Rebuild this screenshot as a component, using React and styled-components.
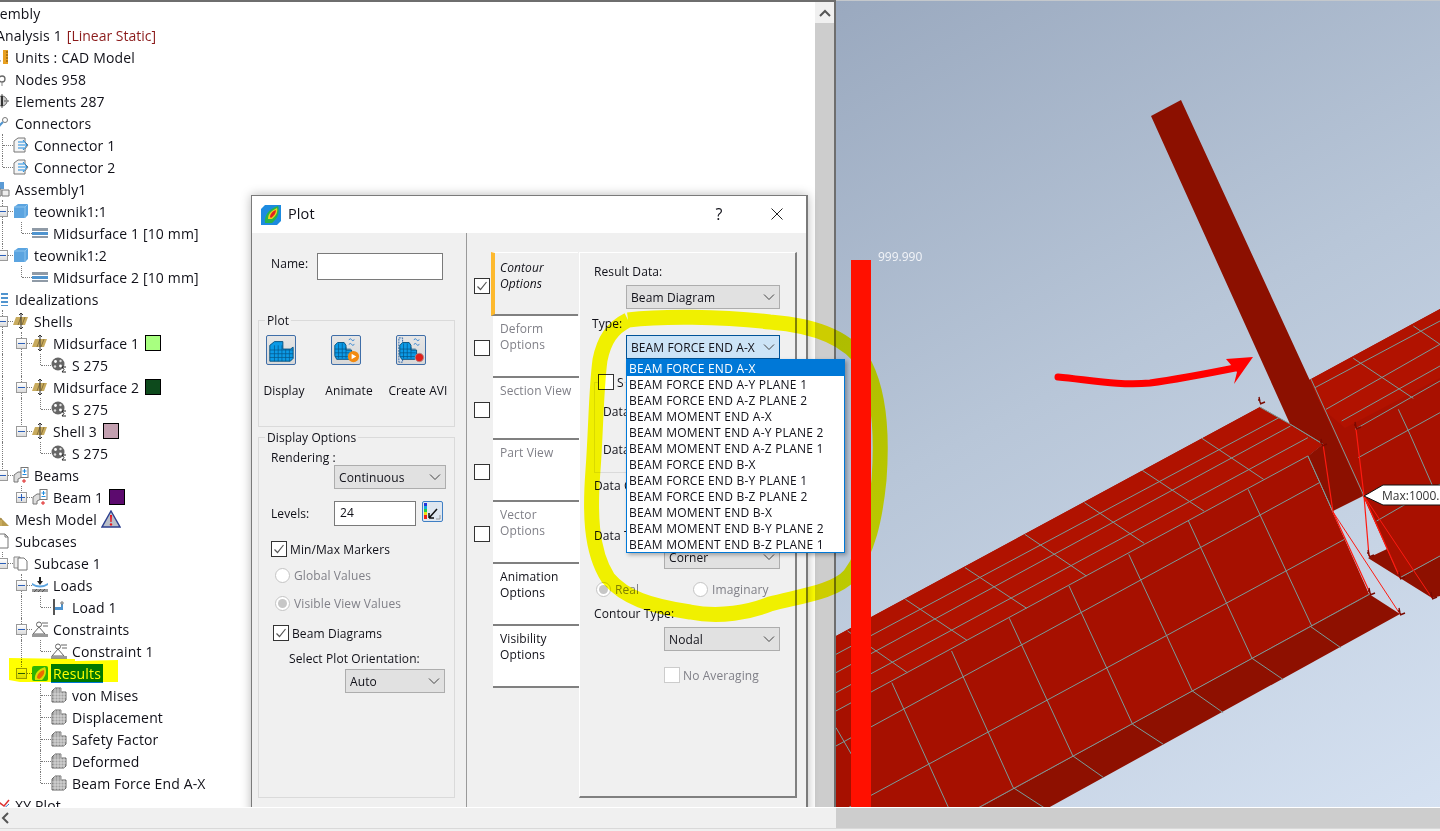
import React from "react";
import styled, { createGlobalStyle, css } from "styled-components";

const GlobalStyle = createGlobalStyle`
	html, body {
		margin: 0;
		height: 100%;
		overflow: hidden;
		background: #f0f0f0;
		font-family: "Open Sans", "Noto Sans", sans-serif;
	}
	* {
		box-sizing: border-box;
	}
`;

// tree icons, all on a 16x16 grid
const TREE_ICONS = {
	units: (
		<>
			<path d="M2 2h3v8a2.5 2.5 0 1 1-3 0z" fill="#eee" stroke="#666" />
			<circle cx="3.5" cy="12" r="1.6" fill="#d9534f" />
			<rect x="9" y="1" width="5" height="14" fill="#e8a020" />
			<path d="M12 3h2M12 6h2M12 9h2M12 12h2" stroke="#7a4a00" />
		</>
	),
	node: (
		<>
			<circle cx="8" cy="8" r="3" fill="#fff" stroke="#666" strokeWidth="1.3" />
			<path d="M8 11v4" stroke="#888" />
		</>
	),
	element: (
		<>
			<circle cx="8" cy="8" r="5" fill="#ccc" stroke="#666" />
			<path d="M8 1v14M1 8h14" stroke="#555" strokeDasharray="2 1" />
			<path d="M8 3v10" stroke="#333" strokeWidth="2" />
		</>
	),
	wire: (
		<>
			<path d="M1 15 9 7" stroke="#4f94cf" strokeWidth="2" />
			<circle cx="11" cy="5" r="2.5" fill="#fff" stroke="#777" />
		</>
	),
	connector: (
		<>
			<path d="M1 4 5 1h7v4l3 3-3 4v3H1z" fill="#f4f4f4" stroke="#777" />
			<path d="M5 5h6M5 8h9M5 11h6M10 3l4 5-4 5" stroke="#1c8be0" fill="none" />
		</>
	),
	assembly: (
		<>
			<rect x="4" y="1" width="6" height="7" fill="#5b9bd5" />
			<path d="M1 8h6v7H1zM8 9h7v6H8z" fill="#eee" stroke="#777" />
		</>
	),
	part: (
		<>
			<path d="M1 4 5 1h10v11l-3 3H1z" fill="#5ba4e0" />
			<path d="M1 4h11v11M12 4l3-3" stroke="#8cc4ee" fill="none" />
		</>
	),
	mid: (
		<>
			<rect x="0" y="3" width="16" height="3" fill="#8f9aa6" />
			<rect x="0" y="7" width="16" height="3" fill="#4f94cf" />
			<rect x="0" y="11" width="16" height="2" fill="#8f9aa6" />
		</>
	),
	ideal: (
		<>
			<path d="M1 3h5M1 7h5M1 11h5" stroke="#777" strokeDasharray="1 1" />
			<path d="M7 2h7v2H7zM7 6h7v2H7zM7 10h7v2H7zM7 14h7v1H7z" fill="#4f94cf" />
		</>
	),
	shell: (
		<>
			<path d="M0 12 3 4h12l-3 8z" fill="#c8ab5e" />
			<path d="M5 12 8 4M9 12l3-8" stroke="#8a7238" />
			<path d="M8 0v16M6 2l2-2 2 2M6 14l2 2 2-2" stroke="#333" fill="none" />
		</>
	),
	material: (
		<>
			<circle cx="7" cy="7" r="6.5" fill="#666" />
			<circle cx="4.5" cy="4.5" r="1.4" fill="#fff" />
			<circle cx="9.5" cy="9" r="1.4" fill="#fff" />
			<circle cx="4" cy="9.5" r="1.2" fill="#ddd" />
			<circle cx="9.5" cy="4" r="1.2" fill="#ddd" />
			<path d="M15 10h-4l2 2.5-2 2.5h4" fill="none" stroke="#222" />
		</>
	),
	beam: (
		<>
			<path d="M1 15V8l4-3h4v5l-4 2v3z" fill="#ddd" stroke="#777" />
			<rect x="8" y="0.5" width="7" height="10" fill="#fff" stroke="#777" />
			<path d="M9.5 4h4M11.5 2v4" stroke="#1c8be0" />
			<path d="M9.5 7.5h4" stroke="#1c8be0" />
			<path d="M11 12v4M9 14h4" stroke="#d22" />
		</>
	),
	mesh: (
		<>
			<path d="M0 2 8 8v7H0z" fill="#c8ab5e" />
			<path d="M8 8l7 7H8z" fill="#b89b4e" />
			<path d="M0 8h8M4 5v10" stroke="#8a7238" />
		</>
	),
	page: (
		<>
			<path d="M4 1h7l3 3v11H4z" fill="#fff" stroke="#777" />
			<path d="M11 1v3h3" fill="none" stroke="#777" />
		</>
	),
	subcase: (
		<>
			<path d="M1 2h6v11H1z" fill="#eee" stroke="#888" />
			<path d="M5 3h6l3 3v9H5z" fill="#fff" stroke="#777" />
		</>
	),
	loads: (
		<>
			<path d="M8 0v6" stroke="#222" strokeWidth="2" />
			<path d="M5 4h6L8 8z" fill="#222" />
			<path d="M0 6q8 5 16 0v2q-8 5-16 0z" fill="#5ba4e0" />
			<path d="M0 12h16v3H0z" fill="#999" />
			<path d="M2 15l3-3M6 15l3-3M10 15l3-3" stroke="#555" />
		</>
	),
	load: (
		<>
			<path d="M3 0v16" stroke="#555" strokeWidth="2" />
			<path d="M4 8h6V5l2 0v6H4z" fill="#4f94cf" />
			<path d="M11 2v4M9 4h4" stroke="#777" />
		</>
	),
	constraint: (
		<>
			<circle cx="7" cy="3.5" r="2.5" fill="#fff" stroke="#666" />
			<path d="M7 6 1 13h12z" fill="#fff" stroke="#666" />
			<path d="M10 2h6M11 5h5" stroke="#666" />
			<path d="M0 13h16v3H0z" fill="#999" />
		</>
	),
	results: (
		<>
			<rect x="0" y="1" width="16" height="15" rx="2" fill="#2fb44a" />
			<path d="M3 15C2 9 6 4 13 2c2 4 1 9-3 13z" fill="#d8e02a" />
			<path d="M5 13c0-4 3-7 7-8 1 3-1 7-5 9z" fill="#ea6a12" />
		</>
	),
	plot: (
		<>
			<path d="M1 4 4 1h6v4h5v8l-2 2H1z" fill="#a2a2a2" stroke="#666" />
			<path d="M1 7h14M1 10h14M1 13h13M4 1v14M7 1v14M10 1v14M13 5v10" stroke="#e8e8e8" strokeWidth=".7" />
		</>
	),
	chart: (
		<>
			<path d="M1 1v14h14" fill="none" stroke="#555" />
			<path d="M2 12 6 6l4 3 5-6" fill="none" stroke="#d33" strokeWidth="1.5" />
			<path d="M2 14c4-1 8-2 13-7" fill="none" stroke="#37c" />
		</>
	),
};

const WarningIcon = () => (
	<WarningSvg viewBox="0 0 20 18">
		<path d="M10 1 19 17H1z" fill="#b9bfc9" stroke="#2c3f8f" strokeWidth="1.4" />
		<path d="M9 5h2l-.4 7h-1.2z" fill="#e8141c" />
		<circle cx="10" cy="14.4" r="1.2" fill="#e8141c" />
	</WarningSvg>
);

// g = one char per visible guide column: . blank, | line, T tee, L elbow,
// - box on tee, = box on elbow, + plus box on elbow
const TREE = [
	{ level: -1, label: "Assembly" },
	{ level: 0, label: "Analysis 1", note: "[Linear Static]" },
	{ level: 1, icon: "units", label: "Units : CAD Model" },
	{ level: 1, icon: "node", label: "Nodes 958" },
	{ level: 1, icon: "element", label: "Elements 287" },
	{ level: 1, icon: "wire", label: "Connectors" },
	{ g: "T", icon: "connector", label: "Connector 1" },
	{ g: "L", icon: "connector", label: "Connector 2" },
	{ level: 1, icon: "assembly", label: "Assembly1" },
	{ g: "-", icon: "part", label: "teownik1:1" },
	{ g: "|L", icon: "mid", label: "Midsurface 1 [10 mm]" },
	{ g: "=", icon: "part", label: "teownik1:2" },
	{ g: ".L", icon: "mid", label: "Midsurface 2 [10 mm]" },
	{ level: 1, icon: "ideal", label: "Idealizations" },
	{ g: "-", icon: "shell", label: "Shells" },
	{ g: "|-", icon: "shell", label: "Midsurface 1", swatch: "#a8ff80" },
	{ g: "||L", icon: "material", label: "S 275" },
	{ g: "|-", icon: "shell", label: "Midsurface 2", swatch: "#0d4a1c" },
	{ g: "||L", icon: "material", label: "S 275" },
	{ g: "|=", icon: "shell", label: "Shell 3", swatch: "#c3a0b0" },
	{ g: "|.L", icon: "material", label: "S 275" },
	{ g: "=", icon: "beam", label: "Beams" },
	{ g: ".+", icon: "beam", label: "Beam 1", swatch: "#5c0a6e" },
	{ level: 1, icon: "mesh", label: "Mesh Model", warning: true },
	{ level: 1, icon: "page", label: "Subcases" },
	{ g: "=", icon: "subcase", label: "Subcase 1" },
	{ g: ".-", icon: "loads", label: "Loads" },
	{ g: ".|L", icon: "load", label: "Load 1" },
	{ g: ".-", icon: "constraint", label: "Constraints" },
	{ g: ".|L", icon: "constraint", label: "Constraint 1" },
	{ g: ".=", icon: "results", label: "Results", selected: true },
	{ g: "..T", icon: "plot", label: "von Mises" },
	{ g: "..T", icon: "plot", label: "Displacement" },
	{ g: "..T", icon: "plot", label: "Safety Factor" },
	{ g: "..T", icon: "plot", label: "Deformed" },
	{ g: "..L", icon: "plot", label: "Beam Force End A-X" },
	{ level: 1, icon: "chart", label: "XY Plot" },
];

const TreeRowItem = ({ item }) => (
	<TreeRow $level={item.level ?? 1}>
		{[...(item.g || "")].map((kind, i) => (
			<Guide key={i} $kind={kind}>
				{"-=+".includes(kind) && <Expander $plus={kind === "+"} />}
			</Guide>
		))}
		<TreeIcon viewBox="0 0 16 16">{TREE_ICONS[item.icon]}</TreeIcon>
		<TreeLabel $selected={item.selected}>{item.label}</TreeLabel>
		{item.note && <TreeNote>{item.note}</TreeNote>}
		{item.swatch && <Swatch $color={item.swatch} />}
		{item.warning && <WarningIcon />}
	</TreeRow>
);

const Tick = ({ x, y }) => (
	<path
		d={`M${x - 1} ${y - 6}l1 5 1 2M${x} ${y + 1}l5-2M${x - 2} ${y - 3}h2`}
		stroke="#7a0a00"
		strokeWidth="1.4"
		fill="none"
	/>
);

const Model = () => (
	<ModelSvg viewBox="836 0 604 807">
		{/* flange, right part */}
		<polygon points="1300,384 1440,308 1440,555 1400,577 1363,495" fill="#a81000" />
		<polygon points="1300,384 1440,308 1440,377 1345,427 1325,410" fill="#b11200" />
		<polygon points="1368,557 1387,548 1400,577 1440,555 1440,595 1432,597" fill="#8e1000" />
		{/* flange, left part */}
		<polygon points="836,635 1260,406 1290,423 1323,443 1308,455 1333,512 1369,593 979,807 836,807" fill="#a61000" />
		<polygon points="836,635 1260,406 1290,423 1323,443 1308,455 836,710" fill="#b01200" />
		<polygon points="1369,593 1400,613 1048,807 979,807" fill="#8e1000" />
		{/* mesh, traced from the crop of the left flange */}
		<g transform="translate(836 380) scale(.3852 .3333)" stroke="#7a9c9a" fill="none">
			<path
				vectorEffect="non-scaling-stroke"
				d="M1150 110 0 820M1180 135 0 875M1225 170 0 935M1225 225 0 990M1255 305 0 1095M1320 475 0 1300M1385 640 370 1280
				M950 172 1110 295M795 268 955 390M645 365 800 487M490 460 650 585M335 560 495 682M180 655 340 778M30 750 185 875
				M1100 78 1180 130 1265 190M1225 225 1290 390M1070 325 1235 735M915 420 1080 832M760 520 925 930M605 615 770 1030M450 712 615 1125M300 810 460 1220M145 905 292 1280M0 1040 40 1120
				M1230 735 1310 800M925 930 1005 995M615 1125 695 1190M770 1030 850 1090M1080 832 1160 895M460 1220 540 1280"
			/>
		</g>
		{/* mesh, right flange */}
		<g transform="translate(1240 280) scale(.3333)" stroke="#7a9c9a" fill="none">
			<path
				vectorEffect="non-scaling-stroke"
				d="M225 320 600 120M258 385 600 190M305 420 600 255M345 445 600 300M355 530 600 395M410 720 600 610M480 890 600 825
				M520 135 600 190M340 232 520 352M475 385 510 460 580 620"
			/>
		</g>
		{/* web, sits on top of the flanges */}
		<polygon points="1151,115 1181,99 1363,495 1333,510 1308,455 1323,443 1290,423" fill="#8c1000" />
		<path
			d="M1311 378 1364 495M1308 455 1333 511M1290 423 1323 443"
			stroke="#7a9c9a"
			fill="none"
		/>
		{/* deflection lines */}
		<path
			d="M1323 443 1333 511 1370 592M1356 428 1364 495 1369 555M1364 495 1400 577"
			stroke="#ff1a10"
			strokeWidth="1.2"
			fill="none"
		/>
		<path d="M1333 511 1400 613M1364 495 1432 597" stroke="#ff1a10" fill="none" />
		<Tick x={1260} y={402} />
		<Tick x={1322} y={444} />
		<Tick x={1356} y={427} />
		<Tick x={1369} y={555} />
		<Tick x={1370} y={593} />
		<Tick x={1400} y={613} />
		<Tick x={1400} y={577} />
		<Tick x={1432} y={597} />
		<polygon
			points="1364,495 1383,484 1441,484 1441,504 1383,504"
			fill="#fff"
			stroke="#111"
		/>
		<ModelText x="1382" y="499" $color="#333">
			Max:1000.
		</ModelText>
		<rect x="851" y="259" width="20" height="548" fill="#ff1000" />
		<ModelText x="878" y="260" $color="#f2f4f8">
			999.990
		</ModelText>
		{/* red arrow scribbled on the picture */}
		<path
			d="M1058 376C1090 379 1120 385 1150 382 1180 378 1210 372 1240 366"
			stroke="#ff0000"
			strokeWidth="7"
			strokeLinecap="round"
			fill="none"
		/>
		<polygon points="1226,358 1253,356 1234,383 1237,371" fill="#ff0000" />
	</ModelSvg>
);

const PlotLogo = () => (
	<svg width="20" height="20" viewBox="0 0 20 20">
		<path d="M4 0h16v16l-4 4H0V4z" fill="#1c8be0" />
		<path d="M4 18C3 10 8 4 17 1c2 6 0 12-6 17z" fill="#28b44a" />
		<path d="M7 14c0-5 3-8 9-11 1 4-1 8-5 11z" fill="#f2d21c" />
		<path d="M9 12c0-3 3-6 6-7 0 3-2 6-5 8z" fill="#e22222" />
	</svg>
);

const MeshBlock = () => (
	<>
		<path d="M3 10 8 6h9v8h8l3-2v12l-3 3H3z" fill="#0c9ae6" stroke="#05507e" />
		<path
			d="M3 15h25M3 19h25M3 23h25M8 10v17M12 10v17M16 10v17M20 14v13M24 14v13"
			stroke="#06588c"
			strokeWidth=".8"
		/>
	</>
);

const SmallMesh = () => (
	<>
		<path d="M3 10 6 7h7l2 3v5h6v8l-2 2H5l-2-4z" fill="#0c9ae6" stroke="#05507e" />
		<path d="M3 14h17M3 18h17M3 22h17M7 8v16M11 8v16M15 12v12" stroke="#06588c" strokeWidth=".8" />
		<path d="M18 4q2-2 3 0t3 0M18 9q2-2 3 0t3 0" fill="none" stroke="#2a7fd0" />
	</>
);

const PlotButtonIcon = ({ kind }) => (
	<svg width="28" height="28" viewBox="0 0 30 30">
		{kind === "display" && <MeshBlock />}
		{kind === "animate" && (
			<>
				<SmallMesh />
				<circle cx="23" cy="22" r="6" fill="#f28a10" />
				<path d="M21 19l5 3-5 3z" fill="#fff" />
			</>
		)}
		{kind === "avi" && (
			<>
				<path d="M2 2h4v26H2z" fill="#d7e2ee" stroke="#2a5f9f" strokeDasharray="2 1" />
				<SmallMesh />
				<circle cx="24" cy="23" r="4.5" fill="#e0201c" stroke="#b08a8a" />
			</>
		)}
	</svg>
);

const Check = () => (
	<svg width="14" height="14" viewBox="0 0 14 14">
		<path d="M2.5 7.5 5.5 10.5 11.5 3" fill="none" stroke="#555" strokeWidth="1.2" />
	</svg>
);

const Combo = ({ children, ...rest }) => (
	<Select {...rest}>
		<span>{children}</span>
		<svg width="12" height="8" viewBox="0 0 12 8">
			<path d="M1 1.5 6 6.5 11 1.5" fill="none" stroke="#444" />
		</svg>
	</Select>
);

const TABS = [
	{ title: ["Deform", "Options"], dim: true },
	{ title: ["Section View"], dim: true },
	{ title: ["Part View"], dim: true },
	{ title: ["Vector", "Options"], dim: true },
	{ title: ["Animation", "Options"] },
	{ title: ["Visibility", "Options"] },
];

const TYPE_OPTIONS = [
	"BEAM FORCE END A-X",
	"BEAM FORCE END A-Y PLANE 1",
	"BEAM FORCE END A-Z PLANE 2",
	"BEAM MOMENT END A-X",
	"BEAM MOMENT END A-Y PLANE 2",
	"BEAM MOMENT END A-Z PLANE 1",
	"BEAM FORCE END B-X",
	"BEAM FORCE END B-Y PLANE 1",
	"BEAM FORCE END B-Z PLANE 2",
	"BEAM MOMENT END B-X",
	"BEAM MOMENT END B-Y PLANE 2",
	"BEAM MOMENT END B-Z PLANE 1",
];

const PlotDialog = () => (
	<Dialog>
		<TitleBar>
			<PlotLogo />
			<DialogTitle>Plot</DialogTitle>
			<TitleButton>?</TitleButton>
			<TitleButton>
				<svg width="12" height="12" viewBox="0 0 12 12">
					<path d="M.5.5l11 11M11.5.5l-11 11" stroke="#222" />
				</svg>
			</TitleButton>
		</TitleBar>
		<DialogBody>
			<LeftColumn>
				<NameRow>
					<Label $top={2}>Name:</Label>
					<TextBox $width={126} $height={27} />
				</NameRow>
				<GroupBox $height={115} $top={32}>
					<legend>Plot</legend>
					<PlotButtons>
						{[
							["display", "Display", 6],
							["animate", "Animate", 6],
							["avi", "Create AVI", 14],
						].map(([kind, text, shift]) => (
							<PlotButton key={kind}>
								<IconButton>
									<PlotButtonIcon kind={kind} />
								</IconButton>
								<Label $left={shift}>{text}</Label>
							</PlotButton>
						))}
					</PlotButtons>
				</GroupBox>
				<GroupBox $height={369} $top={2}>
					<legend>Display Options</legend>
					<Label $top={4} $left={12}>
						Rendering :
					</Label>
					<Combo $width={112} $left={75}>
						Continuous
					</Combo>
					<LevelsRow>
						<Label>Levels:</Label>
						<TextBox $width={82} $height={25}>
							24
						</TextBox>
						<ColorMapButton>
							<svg width="19" height="19" viewBox="0 0 19 19">
								<rect x="1" y="1" width="3" height="3" fill="#2233dd" />
								<rect x="1" y="4" width="3" height="3" fill="#11aadd" />
								<rect x="1" y="7" width="3" height="3" fill="#22cc44" />
								<rect x="1" y="10" width="3" height="3" fill="#eedd11" />
								<rect x="1" y="13" width="3" height="4" fill="#ee2211" />
								<path d="M6 16 14 7M6 16v-5M6 16h5" stroke="#111" strokeWidth="1.5" fill="none" />
								<path d="M13 17h4v-4" stroke="#999" fill="none" />
							</svg>
						</ColorMapButton>
					</LevelsRow>
					<CheckRow $top={15} $left={12}>
						<CheckBox>
							<Check />
						</CheckBox>
						<Label>Min/Max Markers</Label>
					</CheckRow>
					<RadioRow $top={10} $left={16}>
						<Radio />
						<Label $dim>Global Values</Label>
					</RadioRow>
					<RadioRow $top={12} $left={16}>
						<Radio $on />
						<Label $dim>Visible View Values</Label>
					</RadioRow>
					<CheckRow $top={14} $left={14}>
						<CheckBox>
							<Check />
						</CheckBox>
						<Label>Beam Diagrams</Label>
					</CheckRow>
					<Label $top={9} $left={30}>
						Select Plot Orientation:
					</Label>
					<Combo $width={100} $left={86} $top={3}>
						Auto
					</Combo>
				</GroupBox>
			</LeftColumn>
			<EnableColumn>
				<CheckBox>
					<Check />
				</CheckBox>
				{TABS.slice(0, 4).map((tab) => (
					<CheckBox key={tab.title[0]} />
				))}
			</EnableColumn>
			<TabColumn>
				<ActiveTab>
					Contour
					<br />
					Options
				</ActiveTab>
				{TABS.map((tab) => (
					<Tab key={tab.title[0]} $dim={tab.dim}>
						{tab.title.map((line) => (
							<div key={line}>{line}</div>
						))}
					</Tab>
				))}
			</TabColumn>
			<TabPanel>
				<Label $top={10}>Result Data:</Label>
				<Combo $width={154} $left={32} $top={6}>
					Beam Diagram
				</Combo>
				<Label $top={6} $left={-2}>
					Type:
				</Label>
				<Combo $width={154} $left={32} $top={4} $focused>
					BEAM FORCE END A-X
				</Combo>
				<DataGroup>
					<legend>
						<CheckBox />
						<Label>S</Label>
					</legend>
					<Label $top={13}>Data</Label>
					<Label $top={22}>Data</Label>
				</DataGroup>
				<Label $top={4}>Data C</Label>
				<Label $top={34}>Data T</Label>
				<Combo $width={116} $left={70} $top={2}>
					Corner
				</Combo>
				<RadioRow $top={12} $left={2}>
					<Radio $on />
					<Label $dim $width={74}>
						Real
					</Label>
					<Radio />
					<Label $dim>Imaginary</Label>
				</RadioRow>
				<Label $top={8}>Contour Type:</Label>
				<Combo $width={116} $left={70} $top={6}>
					Nodal
				</Combo>
				<CheckRow $top={16} $left={70}>
					<CheckBox $disabled />
					<Label $dim>No Averaging</Label>
				</CheckRow>
				<DropList>
					{TYPE_OPTIONS.map((opt, i) => (
						<DropItem key={opt} $active={i === 0}>
							{opt}
						</DropItem>
					))}
				</DropList>
			</TabPanel>
		</DialogBody>
	</Dialog>
);

const Marker = () => (
	<MarkerSvg viewBox="0 0 1440 807">
		<polygon points="9,658 75,659 75,661 118,660 118,682 20,682 9,680" fill="#ffff00" />
		<path
			d="M628 320C660 316 720 316 770 322 820 326 850 340 865 365 880 395 882 440 879 480 875 520 868 550 850 575 835 592 800 596 770 604 750 612 720 618 690 612 650 606 625 598 608 578 590 550 590 510 593 470 596 430 596 390 600 360 604 340 612 328 628 320"
			stroke="#ffff00"
			strokeWidth="15"
			fill="none"
		/>
	</MarkerSvg>
);

const App = () => (
	<>
		<GlobalStyle />
		<Main>
			<TreePane>
				<TreeList>
					{TREE.map((item, i) => (
						<TreeRowItem key={i} item={item} />
					))}
				</TreeList>
				<VScroll>
					<ScrollArrow>
						<svg width="12" height="8" viewBox="0 0 12 8">
							<path d="M1 7 6 2l5 5" fill="none" stroke="#555" strokeWidth="2" />
						</svg>
					</ScrollArrow>
				</VScroll>
			</TreePane>
			<Viewport>
				<Model />
			</Viewport>
			<PlotDialog />
			<Marker />
		</Main>
		<HScroll>
			<ScrollTrack>
				<svg width="8" height="12" viewBox="0 0 8 12">
					<path d="M7 1 2 6l5 5" fill="none" stroke="#555" strokeWidth="2" />
				</svg>
			</ScrollTrack>
			<ScrollThumb />
		</HScroll>
	</>
);

export default App;

const Main = styled.div`
	position: relative;
	display: flex;
	height: 807px;
	overflow: hidden;
`;

const TreePane = styled.div`
	display: flex;
	flex: none;
	width: 836px;
	background: #ffffff;
	border-top: 2px solid #6e6e6e;
	border-right: 2px solid #6e6e6e;
`;

const TreeList = styled.div`
	flex: 1;
	min-width: 0;
	overflow: hidden;
`;

const TreeRow = styled.div`
	display: flex;
	align-items: center;
	height: 22px;
	margin-left: ${(p) => -6 + 19 * Math.min(p.$level - 1, 0)}px;
	font-size: 14px;
	letter-spacing: 0.15px;
	color: #101018;
	white-space: nowrap;
`;

const TreeIcon = styled.svg`
	flex: none;
	width: 16px;
	height: 16px;
	margin-right: 5px;
`;

const TreeLabel = styled.span`
	${(p) =>
		p.$selected &&
		css`
			margin-left: -2px;
			padding: 0 2px;
			background: #0078d7;
			color: #ffffff;
		`}
`;

const TreeNote = styled.span`
	margin-left: 5px;
	letter-spacing: 0;
	color: #8b1a1a;
`;

const Swatch = styled.span`
	flex: none;
	width: 16px;
	height: 16px;
	margin-left: 6px;
	background: ${(p) => p.$color};
	border: 1px solid #000000;
`;

const WarningSvg = styled.svg`
	flex: none;
	width: 20px;
	height: 18px;
	margin-left: 4px;
`;

const Guide = styled.span`
	position: relative;
	display: flex;
	align-items: center;
	flex: none;
	width: 19px;
	height: 22px;
	padding-left: 3px;
	&::before {
		content: "";
		position: absolute;
		left: 8px;
		top: 0;
		height: ${(p) => ("L=+".includes(p.$kind) ? "11px" : "22px")};
		border-left: ${(p) => (p.$kind === "." ? "0" : "1px dotted #7a7a7a")};
	}
	&::after {
		content: "";
		position: absolute;
		left: 9px;
		right: 0;
		top: 11px;
		border-top: ${(p) => ("|.".includes(p.$kind) ? "0" : "1px dotted #7a7a7a")};
	}
`;

const Expander = styled.span`
	position: relative;
	z-index: 1;
	width: 11px;
	height: 11px;
	background: linear-gradient(#ffffff, #dcdcdc);
	border: 1px solid #9a9a9a;
	&::before {
		content: "";
		position: absolute;
		left: 1px;
		right: 1px;
		top: 4px;
		height: 1px;
		background: #2b5fb8;
	}
	&::after {
		content: "";
		display: ${(p) => (p.$plus ? "block" : "none")};
		position: absolute;
		top: 1px;
		bottom: 1px;
		left: 4px;
		width: 1px;
		background: #2b5fb8;
	}
`;

const VScroll = styled.div`
	flex: none;
	width: 19px;
	background: #cdcdcd;
`;

const ScrollArrow = styled.div`
	display: flex;
	align-items: center;
	justify-content: center;
	height: 21px;
	background: #f0f0f0;
`;

const Viewport = styled.div`
	flex: 1;
	border-top: 1px solid #c4c8cc;
	background: linear-gradient(152deg, #9aa9bf 0%, #b8c6d8 45%, #d5e1f1 100%);
`;

const ModelSvg = styled.svg`
	display: block;
	width: 604px;
	height: 807px;
`;

const ModelText = styled.text`
	font-family: "Open Sans", sans-serif;
	font-size: 12px;
	fill: ${(p) => p.$color};
`;

const MarkerSvg = styled.svg`
	position: absolute;
	left: 0;
	top: 0;
	z-index: 3;
	width: 1440px;
	height: 807px;
	pointer-events: none;
	mix-blend-mode: multiply;
`;

const HScroll = styled.div`
	display: flex;
	height: 22px;
	border-top: 1px solid #ffffff;
	border-bottom: 1px solid #d9d9d9;
`;

const ScrollTrack = styled.div`
	display: flex;
	align-items: center;
	width: 836px;
	padding-left: 1px;
	background: #f0f0f0;
`;

const ScrollThumb = styled.div`
	flex: 1;
	background: #cdcdcd;
`;

const Dialog = styled.div`
	position: absolute;
	left: 251px;
	top: 195px;
	z-index: 2;
	width: 557px;
	height: 660px;
	background: #f0f0f0;
	border: 1px solid #7a7a7a;
	border-right-width: 2px;
	box-shadow: 0 0 10px rgba(0, 0, 0, 0.28);
	font-size: 12px;
	letter-spacing: 0.1px;
	color: #101018;
`;

const TitleBar = styled.div`
	display: flex;
	align-items: center;
	height: 37px;
	padding-left: 9px;
	background: #ffffff;
`;

const DialogTitle = styled.div`
	flex: 1;
	margin-left: 7px;
	padding-bottom: 2px;
	font-size: 14.5px;
`;

const TitleButton = styled.div`
	display: flex;
	align-items: center;
	justify-content: center;
	width: 58px;
	height: 37px;
	padding-bottom: 2px;
	font-size: 16px;
`;

const DialogBody = styled.div`
	display: flex;
	align-items: flex-start;
`;

const LeftColumn = styled.div`
	flex: none;
	width: 215px;
	height: 600px;
	padding: 20px 0 0 6px;
	border-right: 1px solid #9a9a9a;
`;

const NameRow = styled.div`
	display: flex;
	align-items: flex-start;
	padding-left: 13px;
	& > span {
		width: 46px;
	}
`;

const Label = styled.span`
	display: block;
	height: 16px;
	line-height: 18px;
	white-space: nowrap;
	margin-top: ${(p) => p.$top || 0}px;
	margin-left: ${(p) => p.$left || 0}px;
	${(p) => p.$width && `width: ${p.$width}px;`}
	${(p) => p.$dim && "color: #808088;"}
`;

const TextBox = styled.div`
	flex: none;
	width: ${(p) => p.$width}px;
	height: ${(p) => p.$height}px;
	line-height: ${(p) => p.$height - 4}px;
	padding-left: 5px;
	background: #ffffff;
	border: 1px solid #7a7a7a;
`;

const GroupBox = styled.fieldset`
	width: 197px;
	height: ${(p) => p.$height}px;
	min-width: 0;
	margin: ${(p) => p.$top}px 0 0;
	padding: 0;
	border: 1px solid #dadada;
	& > legend {
		height: 16px;
		line-height: 18px;
		margin-left: 6px;
		padding: 0 2px;
	}
`;

const PlotButtons = styled.div`
	display: flex;
	padding: 7px 0 0 7px;
	gap: 35px;
`;

const PlotButton = styled.div`
	display: flex;
	flex-direction: column;
	align-items: center;
	width: 30px;
	gap: 17px;
`;

const IconButton = styled.div`
	display: flex;
	align-items: center;
	justify-content: center;
	width: 30px;
	height: 30px;
	background: linear-gradient(#e6e6e6, #d8d8d8);
	border: 1px solid #3f6ea8;
	border-radius: 2px;
`;

const Select = styled.div`
	display: flex;
	align-items: center;
	justify-content: space-between;
	width: ${(p) => p.$width}px;
	height: 24px;
	margin-top: ${(p) => p.$top || 0}px;
	margin-left: ${(p) => p.$left || 0}px;
	padding: 0 4px;
	background: ${(p) => (p.$focused ? "#cce4f7" : "#e1e1e1")};
	border: 1px solid ${(p) => (p.$focused ? "#005499" : "#adadad")};
`;

const LevelsRow = styled.div`
	display: flex;
	align-items: flex-start;
	margin-top: 12px;
	padding-left: 12px;
	& > span {
		width: 63px;
		margin-top: 4px;
	}
`;

const ColorMapButton = styled.div`
	width: 21px;
	height: 21px;
	margin-left: 6px;
	background: #dfe7f0;
	border: 1px solid #3f7fc4;
	border-radius: 2px;
`;

const CheckRow = styled.div`
	display: flex;
	align-items: center;
	gap: 3px;
	margin-top: ${(p) => p.$top || 0}px;
	margin-left: ${(p) => p.$left || 0}px;
`;

const RadioRow = styled(CheckRow)`
	gap: 4px;
`;

const CheckBox = styled.span`
	display: flex;
	align-items: center;
	justify-content: center;
	flex: none;
	width: 16px;
	height: 16px;
	background: #ffffff;
	border: 1px solid ${(p) => (p.$disabled ? "#cccccc" : "#333333")};
`;

const Radio = styled.span`
	display: flex;
	align-items: center;
	justify-content: center;
	flex: none;
	width: 15px;
	height: 15px;
	background: #ffffff;
	border: 1px solid #c4c4c4;
	border-radius: 50%;
	&::after {
		content: "";
		display: ${(p) => (p.$on ? "block" : "none")};
		width: 9px;
		height: 9px;
		background: #c6c6c6;
		border-radius: 50%;
	}
`;

const EnableColumn = styled.div`
	display: flex;
	flex-direction: column;
	gap: 46px;
	flex: none;
	width: 26px;
	padding: 45px 0 0 7px;
`;

const TabColumn = styled.div`
	flex: none;
	width: 86px;
	margin-top: 19px;
`;

const ActiveTab = styled.div`
	width: 87px;
	height: 64px;
	margin-left: -2px;
	padding: 7px 0 0 5px;
	line-height: 16px;
	font-style: italic;
	border-left: 4px solid #fdb92e;
	border-top: 1px solid #ffffff;
	border-bottom: 2px solid #808080;
`;

const Tab = styled.div`
	height: 62px;
	padding: 5px 0 0 7px;
	line-height: 16px;
	background: #ffffff;
	border-bottom: 2px solid #808080;
	${(p) => p.$dim && "color: #808088;"}
`;

const TabPanel = styled.div`
	position: relative;
	flex: none;
	width: 218px;
	height: 546px;
	margin-top: 19px;
	padding-left: 14px;
	border-style: solid;
	border-width: 1px 2px 2px 1px;
	border-color: #ffffff #808080 #808080 #ffffff;
`;

const DataGroup = styled.fieldset`
	width: 186px;
	height: 99px;
	min-width: 0;
	margin: 15px 0 0;
	padding: 0 0 0 8px;
	border: 1px solid #dadada;
	& > legend {
		display: flex;
		align-items: center;
		gap: 3px;
		height: 16px;
		margin-left: -5px;
		padding: 0;
	}
`;

const DropList = styled.div`
	position: absolute;
	left: 46px;
	top: 106px;
	width: 219px;
	height: 194px;
	background: #ffffff;
	border: 1px solid #0078d7;
	box-shadow: 2px 2px 4px rgba(0, 0, 0, 0.3);
`;

const DropItem = styled.div`
	height: 16px;
	line-height: 18px;
	padding-left: 2px;
	letter-spacing: 0.25px;
	white-space: nowrap;
	${(p) => p.$active && "background: #0078d7; color: #ffffff;"}
`;
